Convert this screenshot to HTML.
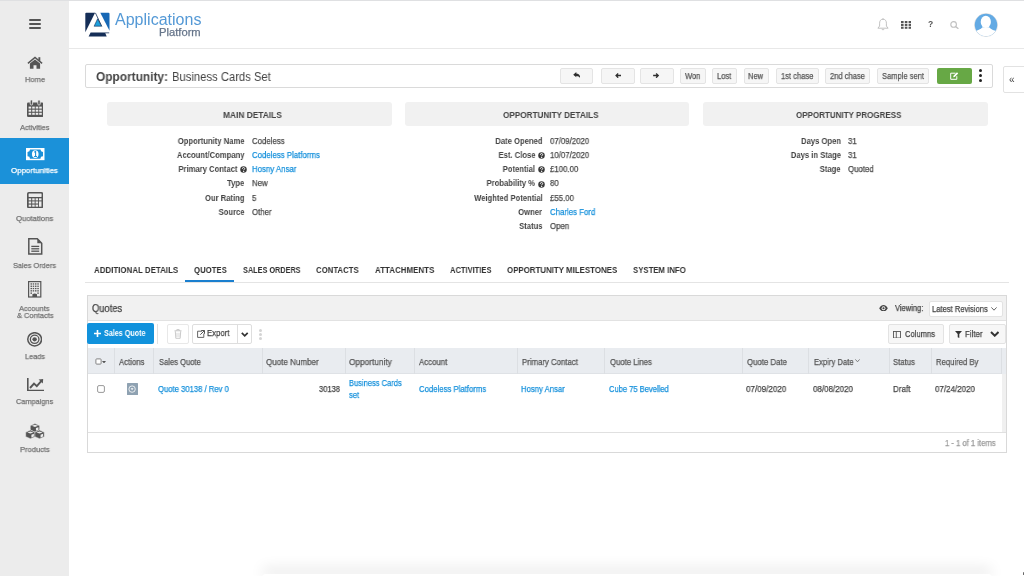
<!DOCTYPE html>
<html><head><meta charset="utf-8">
<style>
html,body{margin:0;padding:0;width:1024px;height:576px;overflow:hidden;background:#fff;font-family:"Liberation Sans",sans-serif;}
.a{position:absolute;box-sizing:border-box;}
.t{position:absolute;white-space:nowrap;will-change:transform;}
.hq{position:absolute;width:7px;height:7px;line-height:0;}
.btn{position:absolute;box-sizing:border-box;background:#f6f6f6;border:1px solid #e4e4e4;border-radius:2px;}
svg{display:block}
</style></head><body>
<!-- top line -->
<div class="a" style="left:0;top:0;width:1024px;height:1px;background:#dfe0e2"></div>
<!-- sidebar -->
<div class="a" style="left:0;top:1px;width:69px;height:575px;background:#ececec"></div>
<div class="a" style="left:0;top:138px;width:69px;height:46px;background:#1b91d9"></div>
<!-- header border -->
<div class="a" style="left:69px;top:48px;width:955px;height:1px;background:#e8e8e8"></div>

<!-- hamburger -->
<div class="a" style="left:29px;top:19.3px;width:12px;height:1.9px;background:#555;border-radius:1px"></div>
<div class="a" style="left:29px;top:23.3px;width:12px;height:1.9px;background:#555;border-radius:1px"></div>
<div class="a" style="left:29px;top:27.3px;width:12px;height:1.9px;background:#555;border-radius:1px"></div>

<!-- home icon -->
<svg class="a" style="left:26.8px;top:56px" width="16" height="13" viewBox="0 0 16 13"><path d="M0.9 7.4 L8 1.4 L15.1 7.4" fill="none" stroke="#555" stroke-width="1.5"/><rect x="11.4" y="1.2" width="1.9" height="3.6" fill="#555"/><path d="M2.9 7.6 L8 3.4 L13.1 7.6 V12.8 H9.5 V9.2 H6.5 V12.8 H2.9 Z" fill="#555"/></svg>
<!-- calendar icon -->
<svg class="a" style="left:26.8px;top:100px" width="16.4" height="17" viewBox="0 0 16.4 17"><rect x="0" y="2.5" width="16.4" height="14.5" rx="1.3" fill="#555"/><rect x="3.2" y="0" width="2.4" height="5" rx="1" fill="#555" stroke="#ececec" stroke-width="0.8"/><rect x="10.8" y="0" width="2.4" height="5" rx="1" fill="#555" stroke="#ececec" stroke-width="0.8"/>
<g fill="#ececec"><rect x="1.6" y="6.6" width="2.6" height="2"/><rect x="5.2" y="6.6" width="2.6" height="2"/><rect x="8.7" y="6.6" width="2.6" height="2"/><rect x="12.2" y="6.6" width="2.6" height="2"/><rect x="1.6" y="9.7" width="2.6" height="2"/><rect x="5.2" y="9.7" width="2.6" height="2"/><rect x="8.7" y="9.7" width="2.6" height="2"/><rect x="12.2" y="9.7" width="2.6" height="2"/><rect x="1.6" y="12.8" width="2.6" height="2"/><rect x="5.2" y="12.8" width="2.6" height="2"/><rect x="8.7" y="12.8" width="2.6" height="2"/><rect x="12.2" y="12.8" width="2.6" height="2"/></g></svg>
<!-- money icon -->
<svg class="a" style="left:26px;top:148.4px" width="18.5" height="12.2" viewBox="0 0 18.5 12.2"><rect x="0" y="0" width="18.5" height="12.2" fill="#fff"/><path d="M4 1.5 H14.5 A2.5 2.5 0 0 0 17 4 V8.2 A2.5 2.5 0 0 0 14.5 10.7 H4 A2.5 2.5 0 0 0 1.5 8.2 V4 A2.5 2.5 0 0 0 4 1.5 Z" fill="#1b91d9"/><ellipse cx="9.25" cy="6.1" rx="3.3" ry="3.9" fill="#fff"/><path d="M8.2 4.2 L9.6 3.5 V8.4 M8.1 8.5 H11" stroke="#1b91d9" stroke-width="1.1" fill="none"/></svg>
<!-- calculator -->
<svg class="a" style="left:27px;top:192px" width="16.2" height="16.4" viewBox="0 0 16.2 16.4"><rect x="0" y="0" width="16.2" height="16.4" rx="1.8" fill="#555"/><rect x="1.6" y="1.5" width="13" height="3.4" rx="0.4" fill="#ececec"/><rect x="2.5" y="2.3" width="11.2" height="1.8" fill="#ececec"/><g fill="#ececec"><rect x="1.7" y="6.3" width="2.5" height="2.1"/><rect x="5.2" y="6.3" width="2.5" height="2.1"/><rect x="8.6" y="6.3" width="2.5" height="2.1"/><rect x="12.0" y="6.3" width="2.5" height="2.1"/><rect x="1.7" y="9.4" width="2.5" height="2.1"/><rect x="5.2" y="9.4" width="2.5" height="2.1"/><rect x="8.6" y="9.4" width="2.5" height="2.1"/><rect x="12.0" y="9.4" width="2.5" height="5.3"/><rect x="1.7" y="12.6" width="2.5" height="2.1"/><rect x="5.2" y="12.6" width="2.5" height="2.1"/><rect x="8.6" y="12.6" width="2.5" height="2.1"/></g></svg>
<!-- document -->
<svg class="a" style="left:28px;top:238px" width="14.5" height="16.8" viewBox="0 0 14.5 16.8"><path d="M0.8 0.8 H9.3 L13.7 5.2 V16 H0.8 Z" fill="none" stroke="#555" stroke-width="1.5"/><path d="M9.3 0.8 V5.2 H13.7 Z" fill="#555"/><g stroke="#555" stroke-width="1.3"><path d="M3.3 8.4 H11.2"/><path d="M3.3 10.8 H11.2"/><path d="M3.3 13.2 H11.2"/></g></svg>
<!-- building -->
<svg class="a" style="left:28.4px;top:281px" width="13.4" height="16.6" viewBox="0 0 13.4 16.6"><rect x="0.6" y="0.6" width="12.2" height="15.4" fill="#ececec" stroke="#555" stroke-width="1.2"/><g fill="#555"><rect x="2.5" y="2.3" width="1.5" height="1.3"/><rect x="4.7" y="2.3" width="1.5" height="1.3"/><rect x="7.0" y="2.3" width="1.5" height="1.3"/><rect x="9.3" y="2.3" width="1.5" height="1.3"/><rect x="2.5" y="4.6" width="1.5" height="1.3"/><rect x="4.7" y="4.6" width="1.5" height="1.3"/><rect x="7.0" y="4.6" width="1.5" height="1.3"/><rect x="9.3" y="4.6" width="1.5" height="1.3"/><rect x="2.5" y="6.9" width="1.5" height="1.3"/><rect x="4.7" y="6.9" width="1.5" height="1.3"/><rect x="7.0" y="6.9" width="1.5" height="1.3"/><rect x="9.3" y="6.9" width="1.5" height="1.3"/><rect x="2.5" y="9.2" width="1.5" height="1.3"/><rect x="4.7" y="9.2" width="1.5" height="1.3"/><rect x="7.0" y="9.2" width="1.5" height="1.3"/><rect x="9.3" y="9.2" width="1.5" height="1.3"/><rect x="2.5" y="11.5" width="1.5" height="1.3"/><rect x="9.3" y="11.5" width="1.5" height="1.3"/><path d="M4.4 16 V13.3 Q6.7 11.6 9 13.3 V16 Z"/></g></svg>
<!-- target -->
<svg class="a" style="left:27.2px;top:332px" width="15.3" height="14.6" viewBox="0 0 15.3 14.6"><ellipse cx="7.65" cy="7.3" rx="6.9" ry="6.6" fill="none" stroke="#555" stroke-width="1.5"/><ellipse cx="7.65" cy="7.3" rx="4.3" ry="4.1" fill="none" stroke="#555" stroke-width="1.3"/><ellipse cx="7.65" cy="7.3" rx="2.2" ry="2.1" fill="#555"/></svg>
<!-- chart -->
<svg class="a" style="left:26.7px;top:378.2px" width="17.5" height="13.3" viewBox="0 0 17.5 13.3"><path d="M0.8 0 V12.5 H17.5" fill="none" stroke="#555" stroke-width="1.6"/><path d="M3 10 L7 5.6 L9.8 8.2 L14.2 3.2" fill="none" stroke="#555" stroke-width="1.9"/><path d="M11.6 1.4 L16.2 0.9 L15.8 5.4 Z" fill="#555"/></svg>
<!-- cubes -->
<svg class="a" style="left:22px;top:420px" width="26" height="22" viewBox="22 420 26 22"><path d="M34.95 423.50 L39.65 425.74 L39.65 430.04 L34.95 432.10 L30.25 430.04 L30.25 425.74 Z" fill="#555" stroke="#ececec" stroke-width="0.5"/><path d="M34.95 424.80 L38.05 425.85 L34.95 426.90 L31.85 425.85 Z" fill="#ececec"/><path d="M35.95 428.10 L38.45 427.20 L38.45 429.90 L35.95 430.80 Z" fill="#ececec"/><path d="M30.40 430.10 L35.10 432.34 L35.10 436.64 L30.40 438.70 L25.70 436.64 L25.70 432.34 Z" fill="#555" stroke="#ececec" stroke-width="0.5"/><path d="M30.40 431.40 L33.50 432.45 L30.40 433.50 L27.30 432.45 Z" fill="#ececec"/><path d="M31.40 434.70 L33.90 433.80 L33.90 436.50 L31.40 437.40 Z" fill="#ececec"/><path d="M39.55 430.10 L44.25 432.34 L44.25 436.64 L39.55 438.70 L34.85 436.64 L34.85 432.34 Z" fill="#555" stroke="#ececec" stroke-width="0.5"/><path d="M39.55 431.40 L42.65 432.45 L39.55 433.50 L36.45 432.45 Z" fill="#ececec"/><path d="M40.55 434.70 L43.05 433.80 L43.05 436.50 L40.55 437.40 Z" fill="#ececec"/></svg>

<!-- logo -->
<svg class="a" style="left:82px;top:8px" width="30" height="32" viewBox="82 8 30 32">
<path d="M85.3 13.7 Q85.3 12.7 86.3 12.7 L95.1 12.7 L85.3 32.2 Z" fill="#152e57"/>
<path d="M100.3 12.7 L108.5 12.7 Q109.5 12.7 109.5 13.7 L109.5 30.8 Z" fill="#1768b5"/>
<path d="M90.6 32.4 L109.2 32.4 L109.2 33.2 L105.3 33.2 L106.7 36.6 L88.6 36.6 Z" fill="#152e57"/>
<path d="M95.4 12.9 L101.8 26.4" stroke="#152e57" stroke-width="0.8"/>
<path d="M97.6 18.8 L101.5 26.2 L94.1 26.2 Z" fill="#1da0dd" stroke="#152e57" stroke-width="0.6"/>
</svg>

<!-- header icons -->
<svg class="a" style="left:876.5px;top:17.5px" width="12" height="13" viewBox="0 0 12 13"><path d="M6 1.2 C3.6 1.2 2.6 3 2.6 5.2 V8 L0.9 10.2 H11.1 L9.4 8 V5.2 C9.4 3 8.4 1.2 6 1.2 Z" fill="none" stroke="#bbb" stroke-width="0.9"/><path d="M4.8 11 A1.3 1.3 0 0 0 7.2 11" fill="none" stroke="#bbb" stroke-width="0.9"/><circle cx="6" cy="0.9" r="0.7" fill="#bbb"/></svg>
<svg class="a" style="left:900.5px;top:21px" width="10.2" height="7.8" viewBox="0 0 10.2 7.8"><g fill="#555"><rect x="0" y="0" width="2.6" height="2.1"/><rect x="3.8" y="0" width="2.6" height="2.1"/><rect x="7.6" y="0" width="2.6" height="2.1"/><rect x="0" y="2.85" width="2.6" height="2.1"/><rect x="3.8" y="2.85" width="2.6" height="2.1"/><rect x="7.6" y="2.85" width="2.6" height="2.1"/><rect x="0" y="5.7" width="2.6" height="2.1"/><rect x="3.8" y="5.7" width="2.6" height="2.1"/><rect x="7.6" y="5.7" width="2.6" height="2.1"/></g></svg>
<div class="t" style="left:927.5px;top:19.5px;font-size:8.5px;line-height:8.5px;font-weight:700;color:#555">?</div>
<svg class="a" style="left:949.5px;top:20.6px" width="9" height="8" viewBox="0 0 9 8"><circle cx="3.6" cy="3.4" r="2.8" fill="none" stroke="#c0c0c0" stroke-width="1.1"/><path d="M5.6 5.4 L8.4 7.8" stroke="#c0c0c0" stroke-width="1.3"/></svg>
<!-- avatar -->
<svg class="a" style="left:974px;top:12.8px" width="24" height="24" viewBox="0 0 24 24"><defs><clipPath id="cc"><circle cx="12" cy="12" r="11.2"/></clipPath></defs>
<circle cx="12" cy="12" r="11.5" fill="#fff" stroke="#dcdcdc" stroke-width="0.9"/>
<g clip-path="url(#cc)"><rect x="0" y="0" width="24" height="24" fill="#63aae4"/><ellipse cx="11.8" cy="8.9" rx="5.1" ry="6.1" fill="#fff"/><path d="M-2 26 V18.8 C2 18 6.3 16.8 8.5 14.2 H15.1 C17.3 16.8 21.6 18 25.6 18.8 V26 Z" fill="#fff"/></g></svg>

<!-- title bar -->
<div class="a" style="left:85px;top:64px;width:908px;height:24px;border:1px solid #dadada;border-radius:2px;background:#fff"></div>
<div class="btn" style="left:559.5px;top:68px;width:33.5px;height:15.8px"></div>
<div class="btn" style="left:601.2px;top:68px;width:33.5px;height:15.8px"></div>
<div class="btn" style="left:640.2px;top:68px;width:33.5px;height:15.8px"></div>
<div class="btn" style="left:680.4px;top:68px;width:25.4px;height:15.8px"></div>
<div class="btn" style="left:712.3px;top:68px;width:25.2px;height:15.8px"></div>
<div class="btn" style="left:743.6px;top:68px;width:25.3px;height:15.8px"></div>
<div class="btn" style="left:776.1px;top:68px;width:42.5px;height:15.8px"></div>
<div class="btn" style="left:824.8px;top:68px;width:45.7px;height:15.8px"></div>
<div class="btn" style="left:877.2px;top:68px;width:52.3px;height:15.8px"></div>
<div class="a" style="left:936.6px;top:67.8px;width:35px;height:16.1px;background:#67a845;border-radius:2px"></div>
<!-- reply/arrows -->
<svg class="a" style="left:572.6px;top:72px" width="7.6" height="6.8" viewBox="0 0 12 11"><path d="M0.2 4.3 L5.2 0.2 V2.5 C9.2 2.7 11.8 5.2 11.8 10.8 C10.6 7.8 8.6 6.6 5.2 6.5 V8.6 Z" fill="#2e2e2e"/></svg>
<svg class="a" style="left:615.2px;top:73.2px" width="6.3" height="5.2" viewBox="0 0 12 10"><path d="M5.2 0 L0.2 5 L5.2 10 L7 8.3 L5.1 6.4 H11.8 V3.6 H5.1 L7 1.7 Z" fill="#2e2e2e"/></svg>
<svg class="a" style="left:653.4px;top:73.2px" width="6.3" height="5.2" viewBox="0 0 12 10"><path d="M6.8 0 L11.8 5 L6.8 10 L5 8.3 L6.9 6.4 H0.2 V3.6 H6.9 L5 1.7 Z" fill="#2e2e2e"/></svg>
<!-- edit icon -->
<svg class="a" style="left:950px;top:71.5px" width="8.5" height="8" viewBox="0 0 8.5 8"><path d="M5.5 1.2 H0.7 V7.3 H6.8 V4.2" fill="none" stroke="#fff" stroke-width="1"/><path d="M3.2 5.2 L3.5 3.8 L7 0.3 L8.2 1.5 L4.7 5 Z" fill="#fff"/></svg>
<!-- kebab -->
<div class="a" style="left:979.4px;top:69.3px;width:3px;height:3px;border-radius:50%;background:#222"></div>
<div class="a" style="left:979.4px;top:74.1px;width:3px;height:3px;border-radius:50%;background:#222"></div>
<div class="a" style="left:979.4px;top:78.9px;width:3px;height:3px;border-radius:50%;background:#222"></div>
<!-- collapse btn -->
<div class="a" style="left:1003px;top:66.3px;width:30px;height:26.3px;border:1px solid #e2e2e2;border-radius:2px;background:#fff"></div>
<div class="t" style="left:1009px;top:75px;font-size:10px;line-height:10px;color:#444">&#171;</div>

<!-- section header boxes -->
<div class="a" style="left:107px;top:102px;width:284.6px;height:23.7px;background:#f1f1f1;border-radius:3px"></div>
<div class="a" style="left:404.7px;top:102px;width:284px;height:23.7px;background:#f1f1f1;border-radius:3px"></div>
<div class="a" style="left:702.5px;top:102px;width:285px;height:23.7px;background:#f1f1f1;border-radius:3px"></div>

<!-- tabs line -->
<div class="a" style="left:85px;top:282px;width:924px;height:1px;background:#e4e4e4"></div>
<div class="a" style="left:184.6px;top:280.2px;width:49.4px;height:2.2px;background:#1a7fcf"></div>

<!-- grid -->
<div class="a" style="left:86.8px;top:295.2px;width:920px;height:158px;border:1px solid #d9d9d9;background:#fff"></div>
<div class="a" style="left:87.8px;top:296.2px;width:918px;height:25px;background:#f1f1f1;border-bottom:1px solid #e2e2e2"></div>
<!-- eye icon -->
<svg class="a" style="left:878.7px;top:304.9px" width="9" height="6.5" viewBox="0 0 9 6.5"><path d="M0.2 3.25 C1.5 1 3 0 4.5 0 C6 0 7.5 1 8.8 3.25 C7.5 5.5 6 6.5 4.5 6.5 C3 6.5 1.5 5.5 0.2 3.25 Z" fill="#444"/><circle cx="4.5" cy="3.25" r="1.9" fill="#f1f1f1"/><circle cx="4.5" cy="3.25" r="1.1" fill="#444"/></svg>
<div class="a" style="left:929px;top:301px;width:73.5px;height:16px;background:#fff;border:1px solid #e3e3e3;border-radius:2px"></div>
<svg class="a" style="left:991px;top:307px" width="6" height="4" viewBox="0 0 6 4"><path d="M0.4 0.4 L3 3.2 L5.6 0.4" fill="none" stroke="#555" stroke-width="0.9"/></svg>

<!-- toolbar -->
<div class="a" style="left:87.3px;top:323.3px;width:66.8px;height:20.4px;background:#1192dc;border-radius:2px"></div>
<svg class="a" style="left:93.5px;top:330px" width="7" height="7" viewBox="0 0 7 7"><path d="M3.5 0 V7 M0 3.5 H7" stroke="#fff" stroke-width="1.6"/></svg>
<div class="a" style="left:157.2px;top:323.5px;width:1px;height:20px;background:#e0e0e0"></div>
<div class="a" style="left:167px;top:324.3px;width:21.5px;height:19.3px;border:1px solid #e8e8e8;border-radius:2px;background:#fff"></div>
<svg class="a" style="left:173.5px;top:329px" width="8" height="10" viewBox="0 0 8 10"><path d="M0.5 1.8 H7.5 M2.8 1.8 V0.6 H5.2 V1.8 M1.3 2.2 L1.8 9.3 H6.2 L6.7 2.2" fill="none" stroke="#c4c4c4" stroke-width="0.9"/><path d="M3 3.8 V8 M5 3.8 V8" stroke="#c4c4c4" stroke-width="0.7"/></svg>
<div class="a" style="left:192.4px;top:324.3px;width:59.6px;height:19.3px;border:1px solid #dedede;border-radius:2px;background:#fff"></div>
<div class="a" style="left:237.3px;top:324.3px;width:1px;height:19.3px;background:#dedede"></div>
<svg class="a" style="left:197px;top:329.5px" width="8" height="8" viewBox="0 0 8 8"><path d="M5 1.2 H0.6 V7.4 H6.8 V3.6" fill="none" stroke="#555" stroke-width="0.9"/><path d="M4.2 0.5 H7.5 V3.8 M7.3 0.7 L3.3 4.7" fill="none" stroke="#555" stroke-width="1"/></svg>
<svg class="a" style="left:241px;top:331.5px" width="7.5" height="5" viewBox="0 0 7.5 5"><path d="M0.8 0.8 L3.75 3.8 L6.7 0.8" fill="none" stroke="#333" stroke-width="1.7"/></svg>
<div class="a" style="left:258.5px;top:328.6px;width:3px;height:3px;border-radius:50%;background:#d4d4d4"></div>
<div class="a" style="left:258.5px;top:332.8px;width:3px;height:3px;border-radius:50%;background:#d4d4d4"></div>
<div class="a" style="left:258.5px;top:337px;width:3px;height:3px;border-radius:50%;background:#d4d4d4"></div>

<div class="a" style="left:887.6px;top:324.4px;width:56.2px;height:19.9px;border:1px solid #e3e3e3;border-radius:2px;background:#f7f7f7"></div>
<svg class="a" style="left:892.5px;top:330.5px" width="8" height="7.5" viewBox="0 0 8 7.5"><rect x="0.5" y="0.5" width="7" height="6.5" fill="none" stroke="#555" stroke-width="0.9"/><path d="M3.3 0.5 V7" stroke="#555" stroke-width="0.9"/></svg>
<div class="a" style="left:949.3px;top:324.4px;width:57px;height:19.9px;border:1px solid #e3e3e3;border-radius:2px;background:#f7f7f7"></div>
<svg class="a" style="left:955px;top:331px" width="7" height="7" viewBox="0 0 7 7"><path d="M0 0 H7 L4.3 3 V7 L2.7 6.2 V3 Z" fill="#333"/></svg>
<svg class="a" style="left:989.5px;top:331px" width="9.5" height="6" viewBox="0 0 9.5 6"><path d="M1 1 L4.75 4.7 L8.5 1" fill="none" stroke="#333" stroke-width="2"/></svg>

<!-- table header -->
<div class="a" style="left:87.8px;top:348.3px;width:913.8px;height:26px;background:#e9ecf0;border-bottom:1px solid #dfe2e6"></div>
<div class="a" style="left:1001.6px;top:348.3px;width:4.4px;height:84.2px;background:#f0f0f0"></div>
<div class="a" style="left:1001.6px;top:348.3px;width:4.4px;height:26px;background:#e9ecf0"></div>
<!-- col separators -->
<div class="a" style="left:113.7px;top:348.3px;width:1px;height:26px;background:#dcdfe3"></div>
<div class="a" style="left:153.4px;top:348.3px;width:1px;height:26px;background:#dcdfe3"></div>
<div class="a" style="left:261.8px;top:348.3px;width:1px;height:26px;background:#dcdfe3"></div>
<div class="a" style="left:344.5px;top:348.3px;width:1px;height:26px;background:#dcdfe3"></div>
<div class="a" style="left:414.2px;top:348.3px;width:1px;height:26px;background:#dcdfe3"></div>
<div class="a" style="left:516.5px;top:348.3px;width:1px;height:26px;background:#dcdfe3"></div>
<div class="a" style="left:604.1px;top:348.3px;width:1px;height:26px;background:#dcdfe3"></div>
<div class="a" style="left:741.5px;top:348.3px;width:1px;height:26px;background:#dcdfe3"></div>
<div class="a" style="left:808.3px;top:348.3px;width:1px;height:26px;background:#dcdfe3"></div>
<div class="a" style="left:888.7px;top:348.3px;width:1px;height:26px;background:#dcdfe3"></div>
<div class="a" style="left:930.5px;top:348.3px;width:1px;height:26px;background:#dcdfe3"></div>
<div class="a" style="left:1001.3px;top:348.3px;width:1px;height:26px;background:#dcdfe3"></div>
<!-- header checkbox -->
<svg class="a" style="left:94.5px;top:358px" width="7" height="7" viewBox="0 0 7 7"><rect x="0.9" y="0.9" width="5.2" height="5.2" rx="0.8" fill="#fff" stroke="#777" stroke-width="0.9"/></svg>
<svg class="a" style="left:102px;top:360.5px" width="4" height="2.5" viewBox="0 0 4 2.5"><path d="M0 0 H4 L2 2.5 Z" fill="#555"/></svg>
<!-- expiry sort arrow -->
<svg class="a" style="left:855px;top:359px" width="5" height="3.5" viewBox="0 0 5 3.5"><path d="M0.4 0.4 L2.5 2.8 L4.6 0.4" fill="none" stroke="#666" stroke-width="0.8"/></svg>
<!-- row -->
<svg class="a" style="left:97px;top:385px" width="8" height="8" viewBox="0 0 8 8"><rect x="0.6" y="0.6" width="6.8" height="6.8" rx="1.4" fill="#fff" stroke="#9a9a9a" stroke-width="1"/></svg>
<div class="a" style="left:126.9px;top:383.4px;width:11.1px;height:11.3px;background:#8fa2b2;border-radius:0.5px"></div>
<svg class="a" style="left:128.4px;top:385px" width="8.2" height="8.2" viewBox="0 0 8.2 8.2"><circle cx="4.1" cy="4.1" r="3.2" fill="none" stroke="#fff" stroke-width="0.8"/><path d="M2.7 3.3 H5.5 L4.1 5.2 Z" fill="#fff"/></svg>
<!-- grid body bottom -->
<div class="a" style="left:87.8px;top:432.3px;width:918px;height:1px;background:#e0e0e0"></div>

<!-- bottom shadow -->
<div class="a" style="left:262px;top:574px;width:730px;height:8px;box-shadow:0 -6px 14px rgba(0,0,0,0.10);border-radius:40px"></div>

<div class="a" style="left:1022.5px;top:572px;width:1.5px;height:2.5px;background:#666;border-radius:1px"></div>
<span class="t" style="left:25.00px;top:76px;font-size:8px;line-height:8px;font-weight:400;color:#727272;transform:scaleX(0.9370);transform-origin:left;-webkit-text-stroke:0.25px #727272">Home</span>
<span class="t" style="left:20.20px;top:124px;font-size:8px;line-height:8px;font-weight:400;color:#727272;transform:scaleX(0.9347);transform-origin:left;-webkit-text-stroke:0.25px #727272">Activities</span>
<span class="t" style="left:11.40px;top:167px;font-size:8px;line-height:8px;font-weight:400;color:#fff;transform:scaleX(0.9854);transform-origin:left;-webkit-text-stroke:0.25px #fff">Opportunities</span>
<span class="t" style="left:16.30px;top:215px;font-size:8px;line-height:8px;font-weight:400;color:#727272;transform:scaleX(0.9612);transform-origin:left;-webkit-text-stroke:0.25px #727272">Quotations</span>
<span class="t" style="left:13.40px;top:262px;font-size:8px;line-height:8px;font-weight:400;color:#727272;transform:scaleX(0.9210);transform-origin:left;-webkit-text-stroke:0.25px #727272">Sales Orders</span>
<span class="t" style="left:19.40px;top:305px;font-size:8px;line-height:8px;font-weight:400;color:#727272;transform:scaleX(0.9238);transform-origin:left;-webkit-text-stroke:0.25px #727272">Accounts</span>
<span class="t" style="left:16.50px;top:312px;font-size:8px;line-height:8px;font-weight:400;color:#727272;transform:scaleX(0.9325);transform-origin:left;-webkit-text-stroke:0.25px #727272">&amp; Contacts</span>
<span class="t" style="left:25.00px;top:353px;font-size:8px;line-height:8px;font-weight:400;color:#727272;transform:scaleX(0.9176);transform-origin:left;-webkit-text-stroke:0.25px #727272">Leads</span>
<span class="t" style="left:16.30px;top:398px;font-size:8px;line-height:8px;font-weight:400;color:#727272;transform:scaleX(0.9192);transform-origin:left;-webkit-text-stroke:0.25px #727272">Campaigns</span>
<span class="t" style="left:20.00px;top:446px;font-size:8px;line-height:8px;font-weight:400;color:#727272;transform:scaleX(0.9437);transform-origin:left;-webkit-text-stroke:0.25px #727272">Products</span>
<span class="t" style="left:114.50px;top:12px;font-size:16px;line-height:16px;font-weight:400;color:#5499d6;transform:scaleX(1.0014);transform-origin:left">Applications</span>
<span class="t" style="left:159.20px;top:28px;font-size:10.3px;line-height:10.3px;font-weight:400;color:#66758a;transform:scaleX(1.0875);transform-origin:left;-webkit-text-stroke:0.25px #66758a">Platform</span>
<span class="t" style="left:96.10px;top:71px;font-size:12.5px;line-height:12.5px;font-weight:700;color:#444;transform:scaleX(0.9513);transform-origin:left">Opportunity:</span>
<span class="t" style="left:171.50px;top:71px;font-size:12.5px;line-height:12.5px;font-weight:400;color:#444;transform:scaleX(0.9009);transform-origin:left">Business Cards Set</span>
<span class="t" style="left:222.90px;top:111px;font-size:9px;line-height:9px;font-weight:700;color:#444;transform:scaleX(0.9298);transform-origin:left">MAIN DETAILS</span>
<span class="t" style="left:502.50px;top:111px;font-size:9px;line-height:9px;font-weight:700;color:#444;transform:scaleX(0.9079);transform-origin:left">OPPORTUNITY DETAILS</span>
<span class="t" style="left:795.50px;top:111px;font-size:9px;line-height:9px;font-weight:700;color:#444;transform:scaleX(0.8914);transform-origin:left">OPPORTUNITY PROGRESS</span>
<span class="t" style="left:165.88px;top:137px;font-size:9px;line-height:9px;font-weight:700;color:#444;transform:scaleX(0.8500);transform-origin:right">Opportunity Name</span>
<span class="t" style="left:251.50px;top:137px;font-size:9px;line-height:9px;font-weight:400;color:#4a4a4a;transform:scaleX(0.8700);transform-origin:left;-webkit-text-stroke:0.25px #4a4a4a">Codeless</span>
<span class="t" style="left:164.88px;top:151px;font-size:9px;line-height:9px;font-weight:700;color:#444;transform:scaleX(0.8500);transform-origin:right">Account/Company</span>
<span class="t" style="left:251.50px;top:151px;font-size:9px;line-height:9px;font-weight:400;color:#1590db;transform:scaleX(0.8700);transform-origin:left;-webkit-text-stroke:0.25px #1590db">Codeless Platforms</span>
<span class="t" style="left:167.67px;top:165px;font-size:9px;line-height:9px;font-weight:700;color:#444;transform:scaleX(0.8500);transform-origin:right">Primary Contact</span>
<span class="t" style="left:251.50px;top:165px;font-size:9px;line-height:9px;font-weight:400;color:#1590db;transform:scaleX(0.8700);transform-origin:left;-webkit-text-stroke:0.25px #1590db">Hosny Ansar</span>
<span class="t" style="left:224.06px;top:179px;font-size:9px;line-height:9px;font-weight:700;color:#444;transform:scaleX(0.8500);transform-origin:right">Type</span>
<span class="t" style="left:251.50px;top:179px;font-size:9px;line-height:9px;font-weight:400;color:#4a4a4a;transform:scaleX(0.8700);transform-origin:left;-webkit-text-stroke:0.25px #4a4a4a">New</span>
<span class="t" style="left:197.90px;top:194px;font-size:9px;line-height:9px;font-weight:700;color:#444;transform:scaleX(0.8500);transform-origin:right">Our Rating</span>
<span class="t" style="left:251.50px;top:194px;font-size:9px;line-height:9px;font-weight:400;color:#4a4a4a;transform:scaleX(0.8700);transform-origin:left;-webkit-text-stroke:0.25px #4a4a4a">5</span>
<span class="t" style="left:213.88px;top:208px;font-size:9px;line-height:9px;font-weight:700;color:#444;transform:scaleX(0.8500);transform-origin:right">Source</span>
<span class="t" style="left:251.50px;top:208px;font-size:9px;line-height:9px;font-weight:400;color:#4a4a4a;transform:scaleX(0.8700);transform-origin:left;-webkit-text-stroke:0.25px #4a4a4a">Other</span>
<span class="t" style="left:486.88px;top:137px;font-size:9px;line-height:9px;font-weight:700;color:#444;transform:scaleX(0.8500);transform-origin:right">Date Opened</span>
<span class="t" style="left:549.50px;top:137px;font-size:9px;line-height:9px;font-weight:400;color:#4a4a4a;transform:scaleX(0.8700);transform-origin:left;-webkit-text-stroke:0.25px #4a4a4a">07/09/2020</span>
<span class="t" style="left:491.68px;top:151px;font-size:9px;line-height:9px;font-weight:700;color:#444;transform:scaleX(0.8500);transform-origin:right">Est. Close</span>
<span class="t" style="left:549.50px;top:151px;font-size:9px;line-height:9px;font-weight:400;color:#4a4a4a;transform:scaleX(0.8700);transform-origin:left;-webkit-text-stroke:0.25px #4a4a4a">10/07/2020</span>
<span class="t" style="left:497.18px;top:165px;font-size:9px;line-height:9px;font-weight:700;color:#444;transform:scaleX(0.8500);transform-origin:right">Potential</span>
<span class="t" style="left:549.50px;top:165px;font-size:9px;line-height:9px;font-weight:400;color:#4a4a4a;transform:scaleX(0.8700);transform-origin:left;-webkit-text-stroke:0.25px #4a4a4a">£100.00</span>
<span class="t" style="left:478.18px;top:179px;font-size:9px;line-height:9px;font-weight:700;color:#444;transform:scaleX(0.8500);transform-origin:right">Probability %</span>
<span class="t" style="left:549.50px;top:179px;font-size:9px;line-height:9px;font-weight:400;color:#4a4a4a;transform:scaleX(0.8700);transform-origin:left;-webkit-text-stroke:0.25px #4a4a4a">80</span>
<span class="t" style="left:461.56px;top:194px;font-size:9px;line-height:9px;font-weight:700;color:#444;transform:scaleX(0.8500);transform-origin:right">Weighted Potential</span>
<span class="t" style="left:549.50px;top:194px;font-size:9px;line-height:9px;font-weight:400;color:#4a4a4a;transform:scaleX(0.8700);transform-origin:left;-webkit-text-stroke:0.25px #4a4a4a">£55.00</span>
<span class="t" style="left:514.38px;top:208px;font-size:9px;line-height:9px;font-weight:700;color:#444;transform:scaleX(0.8500);transform-origin:right">Owner</span>
<span class="t" style="left:549.50px;top:208px;font-size:9px;line-height:9px;font-weight:400;color:#1590db;transform:scaleX(0.8700);transform-origin:left;-webkit-text-stroke:0.25px #1590db">Charles Ford</span>
<span class="t" style="left:514.88px;top:222px;font-size:9px;line-height:9px;font-weight:700;color:#444;transform:scaleX(0.8500);transform-origin:right">Status</span>
<span class="t" style="left:549.50px;top:222px;font-size:9px;line-height:9px;font-weight:400;color:#4a4a4a;transform:scaleX(0.8700);transform-origin:left;-webkit-text-stroke:0.25px #4a4a4a">Open</span>
<span class="t" style="left:793.67px;top:137px;font-size:9px;line-height:9px;font-weight:700;color:#444;transform:scaleX(0.8500);transform-origin:right">Days Open</span>
<span class="t" style="left:847.60px;top:137px;font-size:9px;line-height:9px;font-weight:400;color:#4a4a4a;transform:scaleX(0.8700);transform-origin:left;-webkit-text-stroke:0.25px #4a4a4a">31</span>
<span class="t" style="left:781.67px;top:151px;font-size:9px;line-height:9px;font-weight:700;color:#444;transform:scaleX(0.8500);transform-origin:right">Days in Stage</span>
<span class="t" style="left:847.60px;top:151px;font-size:9px;line-height:9px;font-weight:400;color:#4a4a4a;transform:scaleX(0.8700);transform-origin:left;-webkit-text-stroke:0.25px #4a4a4a">31</span>
<span class="t" style="left:816.18px;top:165px;font-size:9px;line-height:9px;font-weight:700;color:#444;transform:scaleX(0.8500);transform-origin:right">Stage</span>
<span class="t" style="left:847.60px;top:165px;font-size:9px;line-height:9px;font-weight:400;color:#4a4a4a;transform:scaleX(0.8700);transform-origin:left;-webkit-text-stroke:0.25px #4a4a4a">Quoted</span>
<span class="t" style="left:93.80px;top:266px;font-size:9.2px;line-height:9.2px;font-weight:700;color:#333;transform:scaleX(0.8621);transform-origin:left">ADDITIONAL DETAILS</span>
<span class="t" style="left:194.00px;top:266px;font-size:9.2px;line-height:9.2px;font-weight:700;color:#333;transform:scaleX(0.8454);transform-origin:left">QUOTES</span>
<span class="t" style="left:242.50px;top:266px;font-size:9.2px;line-height:9.2px;font-weight:700;color:#333;transform:scaleX(0.7945);transform-origin:left">SALES ORDERS</span>
<span class="t" style="left:316.20px;top:266px;font-size:9.2px;line-height:9.2px;font-weight:700;color:#333;transform:scaleX(0.8479);transform-origin:left">CONTACTS</span>
<span class="t" style="left:374.60px;top:266px;font-size:9.2px;line-height:9.2px;font-weight:700;color:#333;transform:scaleX(0.8649);transform-origin:left">ATTACHMENTS</span>
<span class="t" style="left:449.80px;top:266px;font-size:9.2px;line-height:9.2px;font-weight:700;color:#333;transform:scaleX(0.8210);transform-origin:left">ACTIVITIES</span>
<span class="t" style="left:507.10px;top:266px;font-size:9.2px;line-height:9.2px;font-weight:700;color:#333;transform:scaleX(0.8588);transform-origin:left">OPPORTUNITY MILESTONES</span>
<span class="t" style="left:633.00px;top:266px;font-size:9.2px;line-height:9.2px;font-weight:700;color:#333;transform:scaleX(0.8462);transform-origin:left">SYSTEM INFO</span>
<span class="t" style="left:91.60px;top:304px;font-size:10px;line-height:10px;font-weight:400;color:#444;transform:scaleX(0.9333);transform-origin:left;-webkit-text-stroke:0.25px #444">Quotes</span>
<span class="t" style="left:894.60px;top:304px;font-size:9px;line-height:9px;font-weight:400;color:#444;transform:scaleX(0.8388);transform-origin:left;-webkit-text-stroke:0.25px #444">Viewing:</span>
<span class="t" style="left:931.80px;top:305px;font-size:9px;line-height:9px;font-weight:400;color:#444;transform:scaleX(0.8449);transform-origin:left;-webkit-text-stroke:0.25px #444">Latest Revisions</span>
<span class="t" style="left:103.80px;top:329px;font-size:9px;line-height:9px;font-weight:700;color:#fff;transform:scaleX(0.7976);transform-origin:left">Sales Quote</span>
<span class="t" style="left:206.50px;top:329px;font-size:9px;line-height:9px;font-weight:400;color:#444;transform:scaleX(0.8649);transform-origin:left;-webkit-text-stroke:0.25px #444">Export</span>
<span class="t" style="left:905.00px;top:330px;font-size:9px;line-height:9px;font-weight:400;color:#444;transform:scaleX(0.8447);transform-origin:left;-webkit-text-stroke:0.25px #444">Columns</span>
<span class="t" style="left:965.30px;top:330px;font-size:9px;line-height:9px;font-weight:400;color:#444;transform:scaleX(0.8750);transform-origin:left;-webkit-text-stroke:0.25px #444">Filter</span>
<span class="t" style="left:118.90px;top:358px;font-size:9px;line-height:9px;font-weight:400;color:#555;transform:scaleX(0.8606);transform-origin:left;-webkit-text-stroke:0.25px #555">Actions</span>
<span class="t" style="left:158.80px;top:358px;font-size:9px;line-height:9px;font-weight:400;color:#555;transform:scaleX(0.8439);transform-origin:left;-webkit-text-stroke:0.25px #555">Sales Quote</span>
<span class="t" style="left:266.30px;top:358px;font-size:9px;line-height:9px;font-weight:400;color:#555;transform:scaleX(0.8927);transform-origin:left;-webkit-text-stroke:0.25px #555">Quote Number</span>
<span class="t" style="left:349.30px;top:358px;font-size:9px;line-height:9px;font-weight:400;color:#555;transform:scaleX(0.9198);transform-origin:left;-webkit-text-stroke:0.25px #555">Opportunity</span>
<span class="t" style="left:419.00px;top:358px;font-size:9px;line-height:9px;font-weight:400;color:#555;transform:scaleX(0.8699);transform-origin:left;-webkit-text-stroke:0.25px #555">Account</span>
<span class="t" style="left:521.60px;top:358px;font-size:9px;line-height:9px;font-weight:400;color:#555;transform:scaleX(0.8662);transform-origin:left;-webkit-text-stroke:0.25px #555">Primary Contact</span>
<span class="t" style="left:609.70px;top:358px;font-size:9px;line-height:9px;font-weight:400;color:#555;transform:scaleX(0.8631);transform-origin:left;-webkit-text-stroke:0.25px #555">Quote Lines</span>
<span class="t" style="left:746.50px;top:358px;font-size:9px;line-height:9px;font-weight:400;color:#555;transform:scaleX(0.8668);transform-origin:left;-webkit-text-stroke:0.25px #555">Quote Date</span>
<span class="t" style="left:813.50px;top:358px;font-size:9px;line-height:9px;font-weight:400;color:#555;transform:scaleX(0.8510);transform-origin:left;-webkit-text-stroke:0.25px #555">Expiry Date</span>
<span class="t" style="left:893.00px;top:358px;font-size:9px;line-height:9px;font-weight:400;color:#555;transform:scaleX(0.8583);transform-origin:left;-webkit-text-stroke:0.25px #555">Status</span>
<span class="t" style="left:936.00px;top:358px;font-size:9px;line-height:9px;font-weight:400;color:#555;transform:scaleX(0.8560);transform-origin:left;-webkit-text-stroke:0.25px #555">Required By</span>
<span class="t" style="left:158.20px;top:385px;font-size:9px;line-height:9px;font-weight:400;color:#1590db;transform:scaleX(0.8536);transform-origin:left;-webkit-text-stroke:0.25px #1590db">Quote 30138 / Rev 0</span>
<span class="t" style="left:314.57px;top:385px;font-size:9px;line-height:9px;font-weight:400;color:#454545;transform:scaleX(0.8400);transform-origin:right;-webkit-text-stroke:0.25px #454545">30138</span>
<span class="t" style="left:348.70px;top:379px;font-size:9px;line-height:9px;font-weight:400;color:#1590db;transform:scaleX(0.8361);transform-origin:left;-webkit-text-stroke:0.25px #1590db">Business Cards</span>
<span class="t" style="left:348.70px;top:391px;font-size:9px;line-height:9px;font-weight:400;color:#1590db;transform:scaleX(0.8489);transform-origin:left;-webkit-text-stroke:0.25px #1590db">set</span>
<span class="t" style="left:418.75px;top:385px;font-size:9px;line-height:9px;font-weight:400;color:#1590db;transform:scaleX(0.8612);transform-origin:left;-webkit-text-stroke:0.25px #1590db">Codeless Platforms</span>
<span class="t" style="left:521.20px;top:385px;font-size:9px;line-height:9px;font-weight:400;color:#1590db;transform:scaleX(0.8573);transform-origin:left;-webkit-text-stroke:0.25px #1590db">Hosny Ansar</span>
<span class="t" style="left:609.20px;top:385px;font-size:9px;line-height:9px;font-weight:400;color:#1590db;transform:scaleX(0.8401);transform-origin:left;-webkit-text-stroke:0.25px #1590db">Cube 75 Bevelled</span>
<span class="t" style="left:745.60px;top:385px;font-size:9px;line-height:9px;font-weight:400;color:#454545;transform:scaleX(0.8946);transform-origin:left;-webkit-text-stroke:0.25px #454545">07/09/2020</span>
<span class="t" style="left:812.50px;top:385px;font-size:9px;line-height:9px;font-weight:400;color:#454545;transform:scaleX(0.8880);transform-origin:left;-webkit-text-stroke:0.25px #454545">08/08/2020</span>
<span class="t" style="left:892.80px;top:385px;font-size:9px;line-height:9px;font-weight:400;color:#454545;transform:scaleX(0.8967);transform-origin:left;-webkit-text-stroke:0.25px #454545">Draft</span>
<span class="t" style="left:935.00px;top:385px;font-size:9px;line-height:9px;font-weight:400;color:#454545;transform:scaleX(0.8880);transform-origin:left;-webkit-text-stroke:0.25px #454545">07/24/2020</span>
<span class="t" style="left:944.70px;top:439px;font-size:8.5px;line-height:8.5px;font-weight:400;color:#999;transform:scaleX(0.9001);transform-origin:left;-webkit-text-stroke:0.25px #999">1 - 1 of 1 items</span>
<span class="t" style="left:684.50px;top:72px;font-size:9px;line-height:9px;font-weight:400;color:#555;transform:scaleX(0.8400);transform-origin:left;-webkit-text-stroke:0.25px #555">Won</span>
<span class="t" style="left:716.50px;top:72px;font-size:9px;line-height:9px;font-weight:400;color:#555;transform:scaleX(0.8400);transform-origin:left;-webkit-text-stroke:0.25px #555">Lost</span>
<span class="t" style="left:747.50px;top:72px;font-size:9px;line-height:9px;font-weight:400;color:#555;transform:scaleX(0.8400);transform-origin:left;-webkit-text-stroke:0.25px #555">New</span>
<span class="t" style="left:781.00px;top:72px;font-size:9px;line-height:9px;font-weight:400;color:#555;transform:scaleX(0.8400);transform-origin:left;-webkit-text-stroke:0.25px #555">1st chase</span>
<span class="t" style="left:829.50px;top:72px;font-size:9px;line-height:9px;font-weight:400;color:#555;transform:scaleX(0.8400);transform-origin:left;-webkit-text-stroke:0.25px #555">2nd chase</span>
<span class="t" style="left:882.00px;top:72px;font-size:9px;line-height:9px;font-weight:400;color:#555;transform:scaleX(0.8400);transform-origin:left;-webkit-text-stroke:0.25px #555">Sample sent</span><div class="hq" style="left:239.90px;top:166.20px"><svg width="7" height="7" viewBox="-0.5 -0.5 17 17" style="overflow:visible"><circle cx="8" cy="8" r="7.9" fill="#3a3a3a"/><path d="M5.2 6.2 C5.2 4.3 6.4 3.2 8 3.2 C9.7 3.2 10.9 4.3 10.9 5.8 C10.9 7.6 8.4 7.8 8.4 9.8" stroke="#fff" stroke-width="2.3" fill="none"/><circle cx="8.4" cy="12.6" r="1.5" fill="#fff"/></svg></div><div class="hq" style="left:537.90px;top:151.90px"><svg width="7" height="7" viewBox="-0.5 -0.5 17 17" style="overflow:visible"><circle cx="8" cy="8" r="7.9" fill="#3a3a3a"/><path d="M5.2 6.2 C5.2 4.3 6.4 3.2 8 3.2 C9.7 3.2 10.9 4.3 10.9 5.8 C10.9 7.6 8.4 7.8 8.4 9.8" stroke="#fff" stroke-width="2.3" fill="none"/><circle cx="8.4" cy="12.6" r="1.5" fill="#fff"/></svg></div><div class="hq" style="left:537.90px;top:166.20px"><svg width="7" height="7" viewBox="-0.5 -0.5 17 17" style="overflow:visible"><circle cx="8" cy="8" r="7.9" fill="#3a3a3a"/><path d="M5.2 6.2 C5.2 4.3 6.4 3.2 8 3.2 C9.7 3.2 10.9 4.3 10.9 5.8 C10.9 7.6 8.4 7.8 8.4 9.8" stroke="#fff" stroke-width="2.3" fill="none"/><circle cx="8.4" cy="12.6" r="1.5" fill="#fff"/></svg></div><div class="hq" style="left:537.90px;top:180.50px"><svg width="7" height="7" viewBox="-0.5 -0.5 17 17" style="overflow:visible"><circle cx="8" cy="8" r="7.9" fill="#3a3a3a"/><path d="M5.2 6.2 C5.2 4.3 6.4 3.2 8 3.2 C9.7 3.2 10.9 4.3 10.9 5.8 C10.9 7.6 8.4 7.8 8.4 9.8" stroke="#fff" stroke-width="2.3" fill="none"/><circle cx="8.4" cy="12.6" r="1.5" fill="#fff"/></svg></div>
</body></html>
